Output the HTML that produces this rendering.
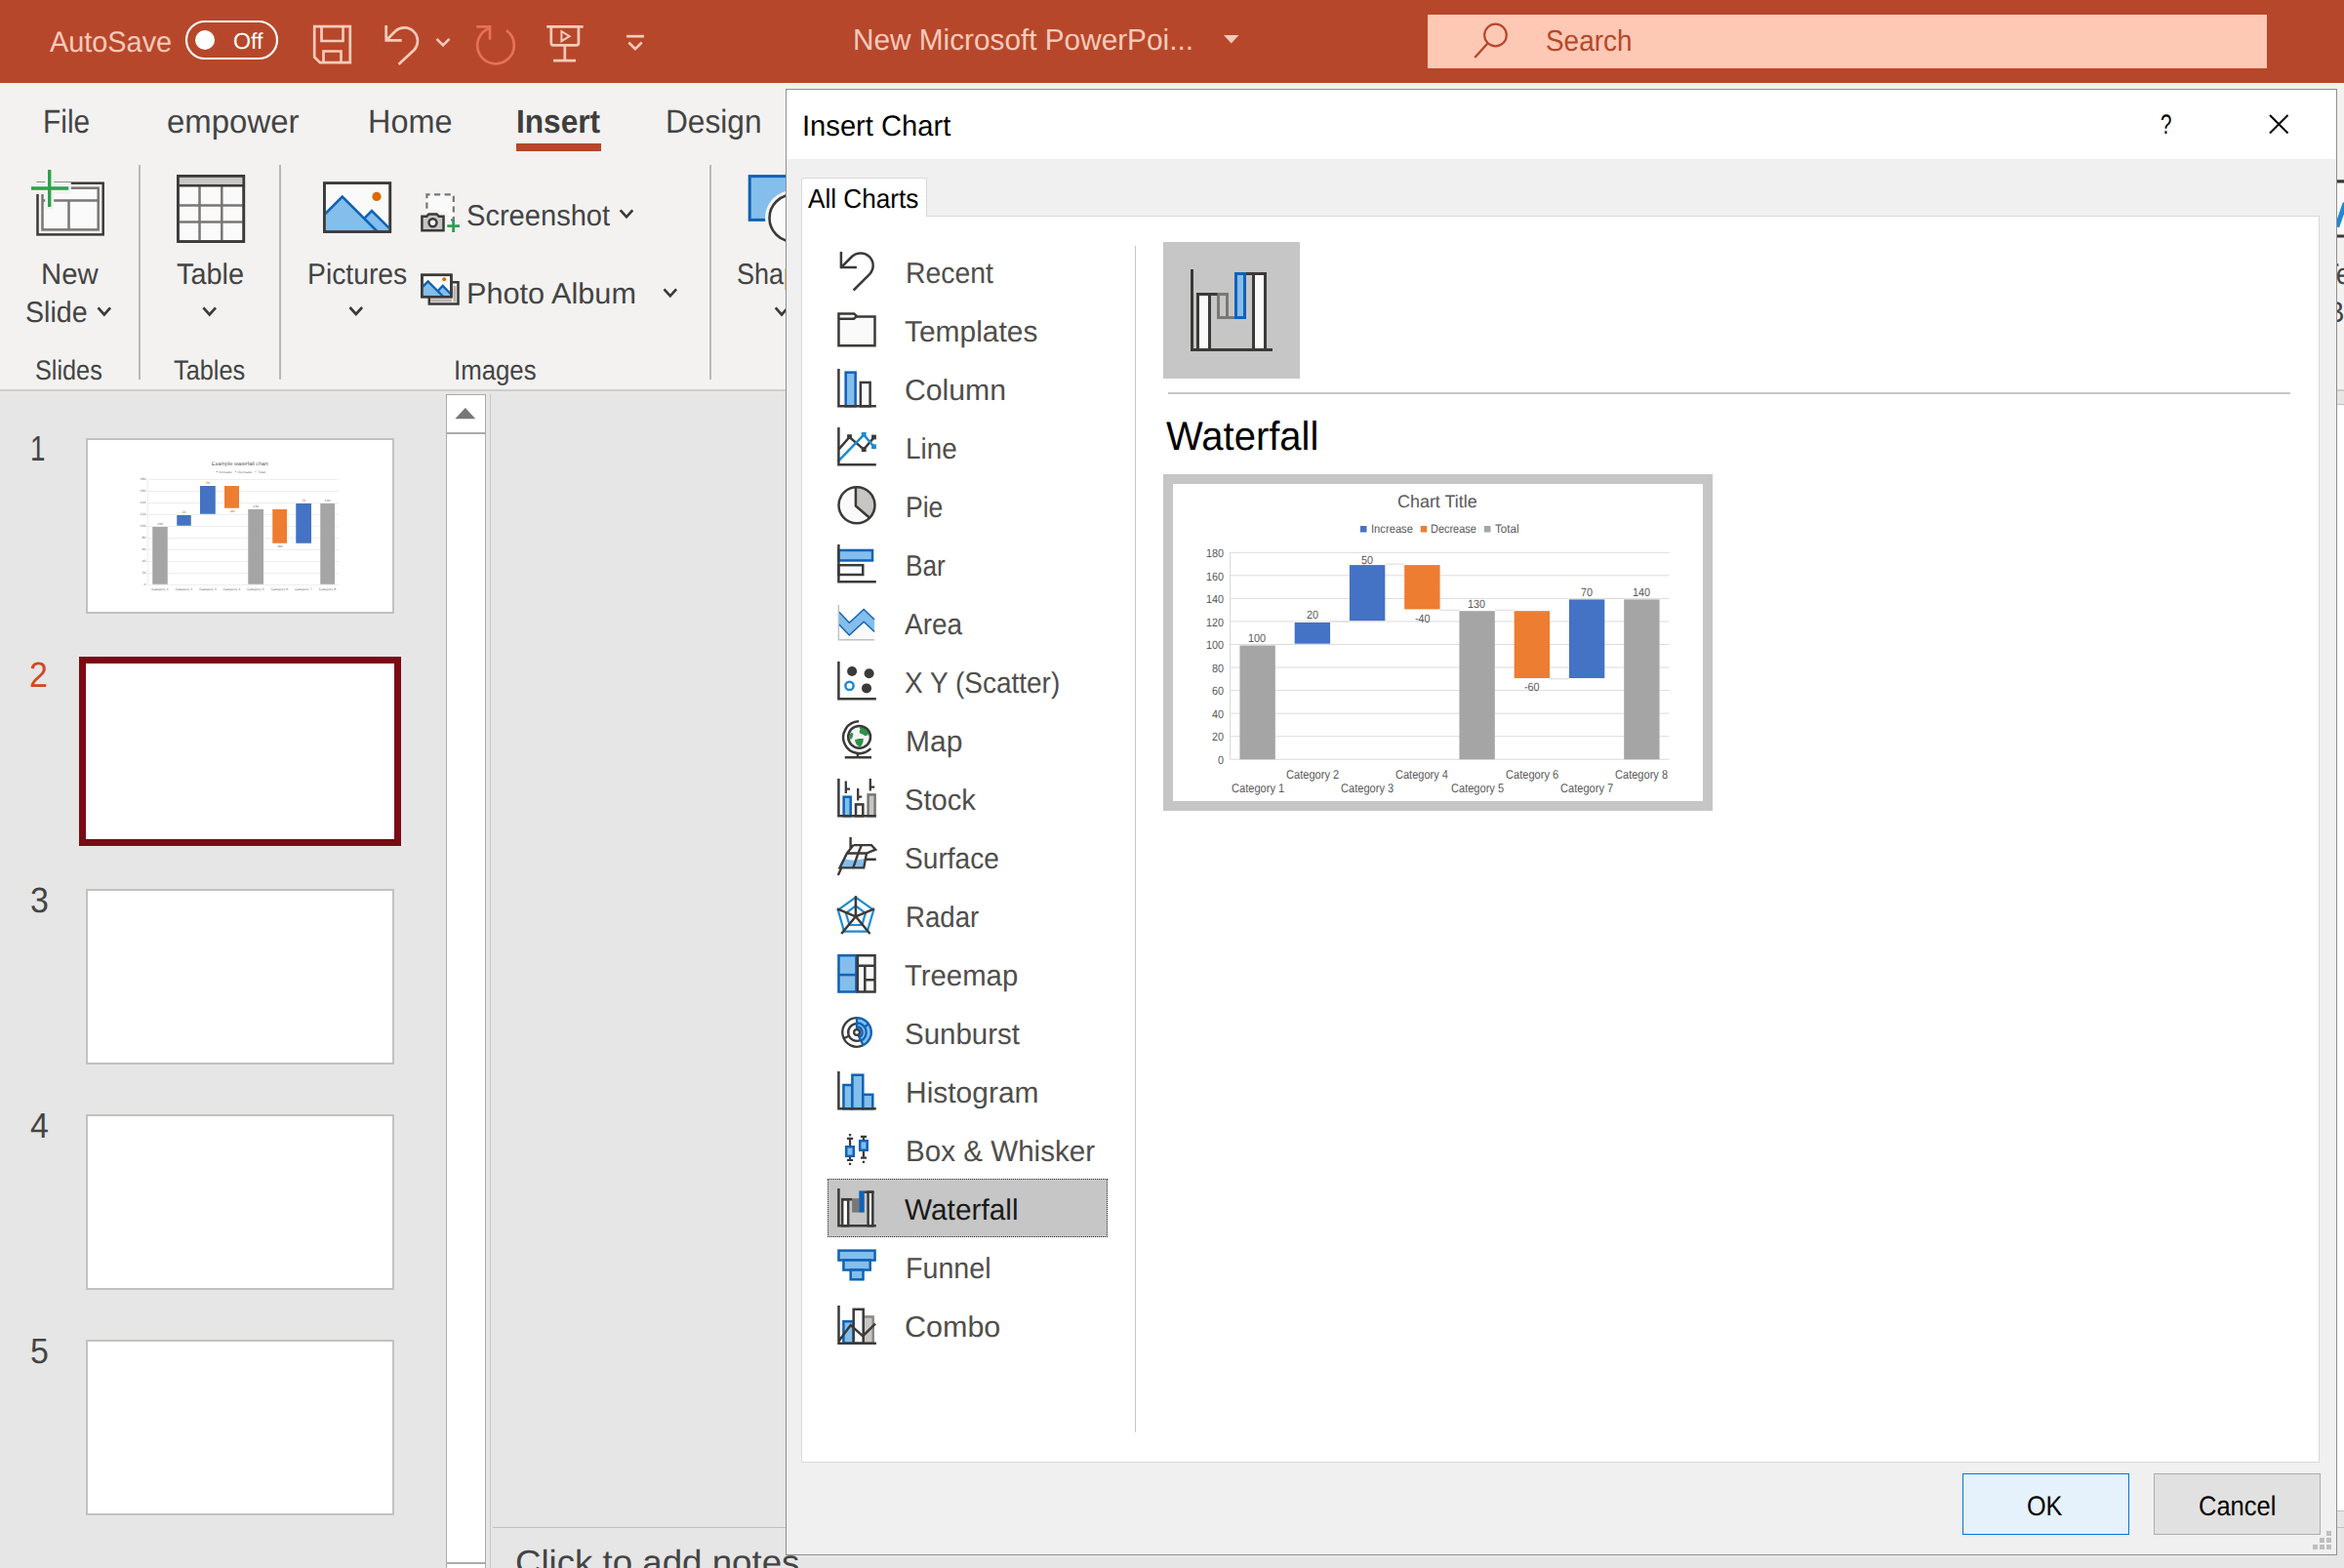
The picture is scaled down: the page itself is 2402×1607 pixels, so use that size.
<!DOCTYPE html>
<html lang="en"><head><meta charset="utf-8"><title>Insert Chart - PowerPoint</title>
<style>
html,body{margin:0;padding:0}
body{width:2402px;height:1607px;overflow:hidden;position:relative;background:#e6e6e6;font-family:"Liberation Sans",sans-serif;text-rendering:geometricPrecision}
body div,body svg,body span.t{position:absolute}
span.t{white-space:nowrap;line-height:1;transform-origin:0 0;display:block}
svg{overflow:visible}
</style></head><body>
<div style="left:0px;top:0px;width:2402px;height:85px;background:#b7472a;"></div>
<div style="left:1463px;top:15px;width:860px;height:55px;background:#fdc9b5;"></div>
<span class="t" style="left:51.00px;top:29.00px;font-size:29.71px;color:#f9cabb;transform:scaleX(0.9715);">AutoSave</span>
<span class="t" style="left:239.41px;top:31.00px;font-size:23.19px;color:#ffffff;transform:scaleX(1.0001);">Off</span>
<span class="t" style="left:873.67px;top:26.00px;font-size:30.43px;color:#f9cabb;transform:scaleX(0.9782);">New Microsoft PowerPoi...</span>
<span class="t" style="left:1584.13px;top:27.00px;font-size:30.43px;color:#b7472a;transform:scaleX(0.9173);">Search</span>
<div style="left:0px;top:85px;width:2402px;height:314px;background:#f3f2f1;"></div>
<div style="left:0px;top:399px;width:2402px;height:2px;background:#cfcdcb;"></div>
<span class="t" style="left:44.07px;top:109.00px;font-size:33.7px;color:#444444;transform:scaleX(0.8866);">File</span>
<span class="t" style="left:171.37px;top:109.00px;font-size:33.7px;color:#444444;transform:scaleX(0.9779);">empower</span>
<span class="t" style="left:377.37px;top:109.00px;font-size:33.7px;color:#444444;transform:scaleX(0.9616);">Home</span>
<span class="t" style="left:681.93px;top:109.00px;font-size:33.7px;color:#444444;transform:scaleX(0.9395);">Design</span>
<span class="t" style="left:528.52px;top:109.00px;font-size:33.7px;color:#3f3e3d;transform:scaleX(0.9386);font-weight:bold;">Insert</span>
<div style="left:529px;top:147px;width:87px;height:8px;background:#b7472a;"></div>
<div style="left:142px;top:169px;width:2px;height:220px;background:#bab8b6;"></div>
<div style="left:286px;top:169px;width:2px;height:220px;background:#bab8b6;"></div>
<div style="left:727px;top:169px;width:2px;height:220px;background:#bab8b6;"></div>
<span class="t" style="left:42.01px;top:267.00px;font-size:30.0px;color:#444444;transform:scaleX(0.9778);">New</span>
<span class="t" style="left:26.31px;top:306.00px;font-size:30.0px;color:#444444;transform:scaleX(0.9542);">Slide</span>
<span class="t" style="left:180.50px;top:267.00px;font-size:30.0px;color:#444444;transform:scaleX(0.9631);">Table</span>
<span class="t" style="left:314.99px;top:267.00px;font-size:30.0px;color:#444444;transform:scaleX(0.9435);">Pictures</span>
<span class="t" style="left:478.29px;top:207.00px;font-size:30.0px;color:#444444;transform:scaleX(0.9694);">Screenshot</span>
<span class="t" style="left:477.90px;top:287.00px;font-size:30.0px;color:#444444;transform:scaleX(1.0228);">Photo Album</span>
<span class="t" style="left:755.16px;top:267.00px;font-size:30.0px;color:#444444;transform:scaleX(0.9011);">Shapes</span>
<span class="t" style="left:36.46px;top:365.00px;font-size:28.26px;color:#444444;transform:scaleX(0.8942);">Slides</span>
<span class="t" style="left:177.60px;top:365.00px;font-size:28.26px;color:#444444;transform:scaleX(0.8959);">Tables</span>
<span class="t" style="left:464.74px;top:365.00px;font-size:28.26px;color:#444444;transform:scaleX(0.9126);">Images</span>
<span class="t" style="left:2380.07px;top:267.00px;font-size:30.0px;color:#444444;transform:scaleX(0.9200);">Text</span>
<span class="t" style="left:2383.84px;top:306.00px;font-size:30.0px;color:#444444;transform:scaleX(0.9200);">Box</span>
<svg style="left:2380px;top:170px;" width="22" height="90" viewBox="0 0 22 90"><rect x="0" y="15.8" width="22" height="56" fill="#fafafa"/><path d="M0 15.8 H22 M0 72 H22" fill="none" stroke="#3b3a39" stroke-width="3.2"/><path d="M14.8 62.5 L23.2 38" fill="none" stroke="#1e8ad2" stroke-width="5"/></svg>
<div style="left:88px;top:449px;width:316px;height:180px;background:#ffffff;border:2px solid #c3c1bf;box-sizing:border-box;"></div>
<span class="t" style="left:31.48px;top:442.00px;font-size:36.5px;color:#444444;transform:scaleX(0.7600);">1</span>
<div style="left:81px;top:673px;width:330px;height:194px;background:#ffffff;border:7px solid #7b0a14;box-sizing:border-box;"></div>
<span class="t" style="left:30.45px;top:674.00px;font-size:36.5px;color:#d24726;transform:scaleX(0.9300);">2</span>
<div style="left:88px;top:911px;width:316px;height:180px;background:#ffffff;border:2px solid #c3c1bf;box-sizing:border-box;"></div>
<span class="t" style="left:30.72px;top:905.00px;font-size:36.5px;color:#444444;transform:scaleX(0.9300);">3</span>
<div style="left:88px;top:1142px;width:316px;height:180px;background:#ffffff;border:2px solid #c3c1bf;box-sizing:border-box;"></div>
<span class="t" style="left:30.72px;top:1136.00px;font-size:36.5px;color:#444444;transform:scaleX(0.9300);">4</span>
<div style="left:88px;top:1373px;width:316px;height:180px;background:#ffffff;border:2px solid #c3c1bf;box-sizing:border-box;"></div>
<span class="t" style="left:30.72px;top:1367.00px;font-size:36.5px;color:#444444;transform:scaleX(0.9300);">5</span>
<svg style="left:88px;top:449px;font-family:&quot;Liberation Sans&quot;,sans-serif;" width="316" height="180" viewBox="88 449 316 180"><rect x="151.25" y="599.0" width="196.25" height="0.5" fill="#dcdcdc"/><rect x="151.25" y="587.0" width="196.25" height="0.5" fill="#dcdcdc"/><rect x="151.25" y="575.0" width="196.25" height="0.5" fill="#dcdcdc"/><rect x="151.25" y="563.0" width="196.25" height="0.5" fill="#dcdcdc"/><rect x="151.25" y="551.0" width="196.25" height="0.5" fill="#dcdcdc"/><rect x="151.25" y="539.0" width="196.25" height="0.5" fill="#dcdcdc"/><rect x="151.25" y="527.0" width="196.25" height="0.5" fill="#dcdcdc"/><rect x="151.25" y="515.0" width="196.25" height="0.5" fill="#dcdcdc"/><rect x="151.25" y="503.0" width="196.25" height="0.5" fill="#dcdcdc"/><rect x="151.25" y="491.0" width="196.25" height="0.5" fill="#dcdcdc"/><rect x="151" y="491.25" width="0.5" height="108" fill="#dcdcdc"/><rect x="156.25" y="540" width="15.5" height="58.75" fill="#a5a5a5"/><rect x="181.25" y="528" width="14.5" height="10.75" fill="#4472c4"/><rect x="205" y="498" width="15.75" height="28.75" fill="#4472c4"/><rect x="230" y="498" width="15" height="22.75" fill="#ed7d31"/><rect x="254.25" y="522" width="15.75" height="76.75" fill="#a5a5a5"/><rect x="279.25" y="522" width="14.75" height="34.75" fill="#ed7d31"/><rect x="303.25" y="516" width="15.75" height="40.75" fill="#4472c4"/><rect x="328.25" y="516" width="14.75" height="82.75" fill="#a5a5a5"/><text x="245.75" y="476.7" font-size="5.2" text-anchor="middle" textLength="58" lengthAdjust="spacingAndGlyphs" fill="#555">Example waterfall chart</text><rect x="221.8" y="483" width="1" height="1" fill="#4472c4"/><rect x="240.8" y="483" width="1" height="1" fill="#ed7d31"/><rect x="261.5" y="483" width="1" height="1" fill="#a5a5a5"/><text x="231" y="484.6" font-size="3.4" text-anchor="middle" textLength="13.5" lengthAdjust="spacingAndGlyphs" fill="#777">Increase</text><text x="251" y="484.6" font-size="3.4" text-anchor="middle" textLength="15" lengthAdjust="spacingAndGlyphs" fill="#777">Decrease</text><text x="268" y="484.6" font-size="3.4" text-anchor="middle" textLength="8" lengthAdjust="spacingAndGlyphs" fill="#777">Total</text><text x="149.6" y="600.4" font-size="3.3" text-anchor="end" textLength="2" lengthAdjust="spacingAndGlyphs" fill="#777">0</text><text x="149.6" y="588.4" font-size="3.3" text-anchor="end" textLength="4" lengthAdjust="spacingAndGlyphs" fill="#777">20</text><text x="149.6" y="576.4" font-size="3.3" text-anchor="end" textLength="4" lengthAdjust="spacingAndGlyphs" fill="#777">40</text><text x="149.6" y="564.4" font-size="3.3" text-anchor="end" textLength="4" lengthAdjust="spacingAndGlyphs" fill="#777">60</text><text x="149.6" y="552.4" font-size="3.3" text-anchor="end" textLength="4" lengthAdjust="spacingAndGlyphs" fill="#777">80</text><text x="149.6" y="540.4" font-size="3.3" text-anchor="end" textLength="6" lengthAdjust="spacingAndGlyphs" fill="#777">100</text><text x="149.6" y="528.4" font-size="3.3" text-anchor="end" textLength="6" lengthAdjust="spacingAndGlyphs" fill="#777">120</text><text x="149.6" y="516.4" font-size="3.3" text-anchor="end" textLength="6" lengthAdjust="spacingAndGlyphs" fill="#777">140</text><text x="149.6" y="504.4" font-size="3.3" text-anchor="end" textLength="6" lengthAdjust="spacingAndGlyphs" fill="#777">160</text><text x="149.6" y="492.4" font-size="3.3" text-anchor="end" textLength="6" lengthAdjust="spacingAndGlyphs" fill="#777">180</text><text x="164" y="537.7" font-size="3.3" text-anchor="middle" textLength="6" lengthAdjust="spacingAndGlyphs" fill="#777">100</text><text x="188.5" y="525.7" font-size="3.3" text-anchor="middle" textLength="4" lengthAdjust="spacingAndGlyphs" fill="#777">20</text><text x="213" y="495.7" font-size="3.3" text-anchor="middle" textLength="4" lengthAdjust="spacingAndGlyphs" fill="#777">50</text><text x="237.5" y="524.8" font-size="3.3" text-anchor="middle" textLength="6" lengthAdjust="spacingAndGlyphs" fill="#777">-40</text><text x="262" y="519.7" font-size="3.3" text-anchor="middle" textLength="6" lengthAdjust="spacingAndGlyphs" fill="#777">130</text><text x="286.5" y="560.6" font-size="3.3" text-anchor="middle" textLength="6" lengthAdjust="spacingAndGlyphs" fill="#777">-60</text><text x="311" y="513.7" font-size="3.3" text-anchor="middle" textLength="4" lengthAdjust="spacingAndGlyphs" fill="#777">70</text><text x="335.6" y="513.7" font-size="3.3" text-anchor="middle" textLength="6" lengthAdjust="spacingAndGlyphs" fill="#777">140</text><text x="164" y="604.9" font-size="3.3" text-anchor="middle" textLength="17.5" lengthAdjust="spacingAndGlyphs" fill="#777">Category 1</text><text x="188.5" y="604.9" font-size="3.3" text-anchor="middle" textLength="17.5" lengthAdjust="spacingAndGlyphs" fill="#777">Category 2</text><text x="213" y="604.9" font-size="3.3" text-anchor="middle" textLength="17.5" lengthAdjust="spacingAndGlyphs" fill="#777">Category 3</text><text x="237.5" y="604.9" font-size="3.3" text-anchor="middle" textLength="17.5" lengthAdjust="spacingAndGlyphs" fill="#777">Category 4</text><text x="262" y="604.9" font-size="3.3" text-anchor="middle" textLength="17.5" lengthAdjust="spacingAndGlyphs" fill="#777">Category 5</text><text x="286.5" y="604.9" font-size="3.3" text-anchor="middle" textLength="17.5" lengthAdjust="spacingAndGlyphs" fill="#777">Category 6</text><text x="311" y="604.9" font-size="3.3" text-anchor="middle" textLength="17.5" lengthAdjust="spacingAndGlyphs" fill="#777">Category 7</text><text x="335.6" y="604.9" font-size="3.3" text-anchor="middle" textLength="17.5" lengthAdjust="spacingAndGlyphs" fill="#777">Category 8</text></svg>
<div style="left:457px;top:404px;width:41px;height:40px;background:#ffffff;border:1px solid #ababab;box-sizing:border-box;"></div>
<div style="left:457px;top:444px;width:41px;height:1158px;background:#ffffff;border:1px solid #ababab;box-sizing:border-box;"></div>
<div style="left:457px;top:1602px;width:41px;height:10px;background:#ffffff;border:1px solid #ababab;box-sizing:border-box;"></div>
<div style="left:502px;top:404px;width:1px;height:1203px;background:#c6c6c6;"></div>
<div style="left:505px;top:1565px;width:300px;height:1px;background:#c0c0c0;"></div>
<span class="t" style="left:528.28px;top:1585.00px;font-size:34.78px;color:#444444;transform:scaleX(1.0543);">Click to add notes</span>
<div style="left:2395px;top:414px;width:7px;height:1px;background:#c0c0c0;"></div>
<div style="left:2395px;top:415px;width:7px;height:1133px;background:#ffffff;"></div>
<div style="left:2395px;top:1548px;width:7px;height:1px;background:#c0c0c0;"></div>
<div style="left:2395px;top:1565px;width:7px;height:1px;background:#c0c0c0;"></div>
<div style="left:805px;top:91px;width:1590px;height:1503px;background:#f0f0f0;border:1px solid #8f8f8d;box-sizing:border-box;"></div>
<div style="left:806px;top:92px;width:1588px;height:71px;background:#ffffff;"></div>
<span class="t" style="left:822.02px;top:115.00px;font-size:29.71px;color:#000;transform:scaleX(0.9818);">Insert Chart</span>
<span class="t" style="left:2214.11px;top:113.00px;font-size:28.26px;color:#000;transform:scaleX(0.7254);">?</span>
<div style="left:821px;top:221px;width:1556px;height:1278px;background:#ffffff;border:1px solid #d9d9d9;box-sizing:border-box;"></div>
<div style="left:821px;top:182px;width:129px;height:40px;background:#ffffff;border:1px solid #d9d9d9;box-sizing:border-box;border-bottom:none;"></div>
<span class="t" style="left:828.00px;top:190.00px;font-size:27.54px;color:#000;transform:scaleX(0.9493);">All Charts</span>
<div style="left:1163px;top:252px;width:1px;height:1216px;background:#c8c8c8;"></div>
<div style="left:848px;top:1208px;width:287px;height:60px;background:#c6c6c6;border:1px dotted #333;box-sizing:border-box;"></div>
<span class="t" style="left:928.03px;top:266.00px;font-size:30.14px;color:#504e4c;transform:scaleX(0.9411);">Recent</span>
<span class="t" style="left:926.78px;top:326.00px;font-size:30.14px;color:#504e4c;transform:scaleX(0.9937);">Templates</span>
<span class="t" style="left:926.58px;top:386.00px;font-size:30.14px;color:#504e4c;transform:scaleX(1.0025);">Column</span>
<span class="t" style="left:928.07px;top:446.00px;font-size:30.14px;color:#504e4c;transform:scaleX(0.9240);">Line</span>
<span class="t" style="left:928.17px;top:506.00px;font-size:30.14px;color:#504e4c;transform:scaleX(0.8816);">Pie</span>
<span class="t" style="left:928.20px;top:566.00px;font-size:30.14px;color:#504e4c;transform:scaleX(0.8705);">Bar</span>
<span class="t" style="left:927.25px;top:626.00px;font-size:30.14px;color:#504e4c;transform:scaleX(0.9286);">Area</span>
<span class="t" style="left:926.81px;top:686.00px;font-size:30.14px;color:#504e4c;transform:scaleX(0.9294);">X Y (Scatter)</span>
<span class="t" style="left:927.91px;top:746.00px;font-size:30.14px;color:#504e4c;transform:scaleX(0.9954);">Map</span>
<span class="t" style="left:927.09px;top:806.00px;font-size:30.14px;color:#504e4c;transform:scaleX(0.9678);">Stock</span>
<span class="t" style="left:927.12px;top:866.00px;font-size:30.14px;color:#504e4c;transform:scaleX(0.9336);">Surface</span>
<span class="t" style="left:928.09px;top:926.00px;font-size:30.14px;color:#504e4c;transform:scaleX(0.9166);">Radar</span>
<span class="t" style="left:926.79px;top:986.00px;font-size:30.14px;color:#504e4c;transform:scaleX(0.9729);">Treemap</span>
<span class="t" style="left:927.08px;top:1046.00px;font-size:30.14px;color:#504e4c;transform:scaleX(0.9783);">Sunburst</span>
<span class="t" style="left:927.91px;top:1106.00px;font-size:30.14px;color:#504e4c;transform:scaleX(0.9946);">Histogram</span>
<span class="t" style="left:927.94px;top:1166.00px;font-size:30.14px;color:#504e4c;transform:scaleX(0.9827);">Box &amp; Whisker</span>
<span class="t" style="left:927.25px;top:1226.00px;font-size:30.14px;color:#1a1a1a;transform:scaleX(0.9896);">Waterfall</span>
<span class="t" style="left:928.01px;top:1286.00px;font-size:30.14px;color:#504e4c;transform:scaleX(0.9509);">Funnel</span>
<span class="t" style="left:926.57px;top:1346.00px;font-size:30.14px;color:#504e4c;transform:scaleX(1.0124);">Combo</span>
<div style="left:1192px;top:248px;width:140px;height:140px;background:#c6c6c6;"></div>
<div style="left:1197px;top:402px;width:1150px;height:2px;background:#c6c6c6;"></div>
<span class="t" style="left:1195.00px;top:427.00px;font-size:41.3px;color:#000;transform:scaleX(0.9689);">Waterfall</span>
<div style="left:1192px;top:486px;width:563px;height:345px;background:#c6c6c6;"></div>
<div style="left:1202px;top:496px;width:543px;height:325px;background:#ffffff;"></div>
<div style="left:2011px;top:1510px;width:171px;height:63px;background:#e5f1fb;border:1px solid #0078d7;box-sizing:border-box;"></div>
<div style="left:2207px;top:1510px;width:171px;height:63px;background:#e1e1e1;border:1px solid #adadad;box-sizing:border-box;"></div>
<span class="t" style="left:2077.32px;top:1529.00px;font-size:28.26px;color:#000;transform:scaleX(0.8928);">OK</span>
<span class="t" style="left:2252.80px;top:1529.00px;font-size:28.26px;color:#000;transform:scaleX(0.9023);">Cancel</span>
<div style="left:2384px;top:1569px;width:5px;height:5px;background:#bfbfbf;"></div>
<div style="left:2377px;top:1576px;width:5px;height:5px;background:#bfbfbf;"></div>
<div style="left:2384px;top:1576px;width:5px;height:5px;background:#bfbfbf;"></div>
<div style="left:2370px;top:1583px;width:5px;height:5px;background:#bfbfbf;"></div>
<div style="left:2377px;top:1583px;width:5px;height:5px;background:#bfbfbf;"></div>
<div style="left:2384px;top:1583px;width:5px;height:5px;background:#bfbfbf;"></div>
<svg style="left:0px;top:0px;" width="700" height="85" viewBox="0 0 700 85"><rect x="191" y="22" width="93" height="38" rx="19" fill="none" stroke="#fff" stroke-width="2.2" /><circle cx="210" cy="41" r="10" fill="#fff"/><path d="M322.2 27.2 H358.8 V64.2 H328 L322.2 58.5 Z" fill="none" stroke="#f9cabb" stroke-width="2.7" /><path d="M329.5 27.5 V42 H351.5 V27.5" fill="none" stroke="#f9cabb" stroke-width="2.7" /><path d="M331.5 64 V52.5 H349.5 V64" fill="none" stroke="#f9cabb" stroke-width="2.7" /><path d="M395.7 26 V41.4 H411.7" fill="none" stroke="#f9cabb" stroke-width="2.7" /><path d="M396.6 40.5 L405.3 31.8 A13.6 13.6 0 0 1 424.5 51 L408.5 66" fill="none" stroke="#f9cabb" stroke-width="2.7" /><path d="M447.5 39.8 L454 46.3 L460.5 39.8" fill="none" stroke="#f9cabb" stroke-width="2.6" /><path d="M502 28.7 A18.8 18.8 0 1 0 518.9 31.2" fill="none" stroke="#e8705a" stroke-width="2.7" /><path d="M488.2 27.4 H502 V40.7" fill="none" stroke="#e8705a" stroke-width="2.7" /><path d="M560.2 27.4 H597.6" fill="none" stroke="#f9cabb" stroke-width="2.7" /><path d="M564.8 27.4 V44 Q564.8 46.3 567.1 46.3 H590.6 Q592.9 46.3 592.9 44 V27.4" fill="none" stroke="#f9cabb" stroke-width="2.7" /><path d="M578.8 46.3 V62 M567 62.2 H590" fill="none" stroke="#f9cabb" stroke-width="2.7" /><path d="M575.4 32.2 L583.6 37.2 L575.4 42.2 Z" fill="none" stroke="#f9cabb" stroke-width="2" /><path d="M642 37.2 H660" fill="none" stroke="#f9cabb" stroke-width="2.7" /><path d="M644.3 43.5 L651 50.2 L657.7 43.5" fill="none" stroke="#f9cabb" stroke-width="2.6" /></svg>
<svg style="left:1250px;top:30px;" width="24" height="20" viewBox="0 0 24 20"><path d="M4 6 H19.5 L11.75 14.5 Z" fill="#f9cabb"/></svg>
<svg style="left:1500px;top:15px;" width="50" height="55" viewBox="0 0 50 55"><circle cx="32.5" cy="21" r="11.3" fill="none" stroke="#b7472a" stroke-width="2.2" /><path d="M24.6 29.2 L11.3 44" fill="none" stroke="#b7472a" stroke-width="2.4" /></svg>
<svg style="left:0px;top:0px;overflow:hidden;" width="805" height="400" viewBox="0 0 805 400"><rect x="38.5" y="187.7" width="67.2" height="52.7" fill="none" stroke="#3b3a39" stroke-width="2.5" /><rect x="43.5" y="192.7" width="57.2" height="42.7" fill="#fafafa" stroke="#797775" stroke-width="2.5" /><path d="M43.5 205.5 H100.7 M70.5 205.5 V235.4" fill="none" stroke="#797775" stroke-width="2.5" /><path d="M50.7 172 V214.5" fill="none" stroke="#f3f2f1" stroke-width="9" /><path d="M30 193 H72.8" fill="none" stroke="#f3f2f1" stroke-width="12" /><path d="M50.7 174 V212 M32 193 H70.3" fill="none" stroke="#2fa04e" stroke-width="3.4" /><path d="M100.5 315.4 L106.8 322.4 L113.1 315.4" fill="none" stroke="#3b3a39" stroke-width="2.7" /><rect x="182.4" y="180.4" width="67.4" height="67.2" fill="#fafafa" stroke="#3b3a39" stroke-width="2.6" /><rect x="183.6" y="181.6" width="65" height="8" fill="#c8c6c4"/><path d="M204.5 191 V247 M227.3 191 V247 M183 210.5 H249 M183 227.5 H249" fill="none" stroke="#797775" stroke-width="2.5" /><path d="M182.4 190.2 H249.8" fill="none" stroke="#3b3a39" stroke-width="2.6" /><rect x="182.4" y="180.4" width="67.4" height="67.2" fill="none" stroke="#3b3a39" stroke-width="2.6" /><path d="M208.39999999999998 315.4 L214.7 322.4 L221.0 315.4" fill="none" stroke="#3b3a39" stroke-width="2.7" /><rect x="332.4" y="187.7" width="67.4" height="49.8" fill="#fafafa" stroke="#3b3a39" stroke-width="2.6" /><svg x="333.7" y="189" width="64.8" height="47.2" viewBox="333.7 189 64.8 47.2" style="overflow:hidden"><path d="M330 222.3 L350.8 201.5 L388 238.7 H330 Z" fill="#83beec"/><path d="M373.2 223.9 L381 216 L402 237 V240 H389.3 Z" fill="#83beec"/><path d="M330 222.3 L350.8 201.5 L388 238.7 M373.2 223.9 L381 216 L402 237" fill="none" stroke="#1062b5" stroke-width="2.6" /></svg><circle cx="386" cy="201.4" r="4.6" fill="#db6a00"/><rect x="332.4" y="187.7" width="67.4" height="49.8" fill="none" stroke="#3b3a39" stroke-width="2.6" /><path d="M358.5 315 L364.8 322.0 L371.1 315" fill="none" stroke="#3b3a39" stroke-width="2.7" /><rect x="437.4" y="199.4" width="27.4" height="26" fill="#fafafa" stroke="#797775" stroke-width="2.2" stroke-dasharray='6.2 4.4' stroke-dashoffset='3'/><path d="M429 240 V217 H436 L438.5 215 H448.5 L451.5 217.5 H458.5 V240 Z" fill="#f3f2f1"/><path d="M432.4 236.3 V221.7 H437.3 L439.5 219.4 H447.5 L449.7 221.7 H454.5 V236.3 Z" fill="#c8c6c4" stroke="#3b3a39" stroke-width="2.5" /><circle cx="443.5" cy="228.2" r="4" fill="#fafafa" stroke="#3b3a39" stroke-width="2.5" /><path d="M464.6 225.5 V238 M458.3 231.7 H471" fill="none" stroke="#2fa04e" stroke-width="2.8" /><path d="M635.7 215.3 L642 222.3 L648.3 215.3" fill="none" stroke="#3b3a39" stroke-width="2.7" /><path d="M439.8 304 V311.4 H469.5 V289.2 H463" fill="none" stroke="#3b3a39" stroke-width="2.5" /><path d="M441 306.5 H463 V309.5 H441 Z M464.5 293 H467.5 V309.5 H464.5Z" fill="#b5b3b1"/><rect x="432.4" y="281.8" width="30" height="22.4" fill="#fafafa" stroke="#3b3a39" stroke-width="2.5" /><svg x="433.6" y="283" width="27.6" height="20" viewBox="433.6 283 27.6 20" style="overflow:hidden"><path d="M431 296 L438.6 288.4 L455 304.8 H431 Z M449 297.7 L453.7 293 L464 303.4 V305 H456Z" fill="#83beec"/><path d="M431 296 L438.6 288.4 L455 304.8 M449 297.7 L453.7 293 L464 303.4" fill="none" stroke="#1062b5" stroke-width="2.3" /></svg><circle cx="455.2" cy="286.3" r="2" fill="#db6a00"/><rect x="432.4" y="281.8" width="30" height="22.4" fill="none" stroke="#3b3a39" stroke-width="2.5" /><path d="M680.5 296.3 L686.8 303.3 L693.0999999999999 296.3" fill="none" stroke="#3b3a39" stroke-width="2.7" /><rect x="768.2" y="180.6" width="60" height="44.8" fill="#83beec" stroke="#1062b5" stroke-width="3" /><circle cx="812.5" cy="223.5" r="28.5" fill="#f3f2f1"/><circle cx="812.5" cy="223.5" r="24" fill="#fafafa" stroke="#3b3a39" stroke-width="2.6" /><path d="M794.7 315.4 L801 322.4 L807.3 315.4" fill="none" stroke="#3b3a39" stroke-width="2.7" /></svg>
<svg style="left:0px;top:0px;" width="2402" height="1607" viewBox="0 0 2402 1607"><g transform="translate(858.2,258)"><path d="M3.7 0 V16.1 H19.7" fill="none" stroke="#3b3a39" stroke-width="2.5" /><path d="M4.3 15.5 L14.75 5 A12.8 12.8 0 0 1 32.85 23.1 L16.4 39.5" fill="none" stroke="#3b3a39" stroke-width="2.5" /></g><g transform="translate(858.2,318)"><path d="M1.25 3.4 H17 L20.1 6.4 H38.3 V36.3 H1.25 Z" fill="#fafafa" stroke="#3b3a39" stroke-width="2.5" /><path d="M1.25 8.7 H16.8 L19.4 6.4" fill="none" stroke="#3b3a39" stroke-width="2.5" /></g><g transform="translate(858.2,378)"><rect x="8.45" y="3.65" width="10.00" height="34.65" fill="#83beec" stroke="#1062b5" stroke-width="2.5" /><rect x="23.65" y="13.95" width="9.75" height="24.35" fill="#fafafa" stroke="#3b3a39" stroke-width="2.5" /><path d="M1.2 0 V38.3 H39.6" fill="none" stroke="#3b3a39" stroke-width="2.5" /></g><g transform="translate(858.2,438)"><path d="M1.2 22.6 L12.3 10 L27 22.6 L37.3 10.4" fill="none" stroke="#3b3a39" stroke-width="2.5" /><rect x="9.9" y="7.199999999999999" width="4.8" height="4.8" fill="#3b3a39"/><rect x="24.6" y="20.200000000000003" width="4.8" height="4.8" fill="#3b3a39"/><rect x="34.9" y="7.6" width="4.8" height="4.8" fill="#3b3a39"/><path d="M0.3 35.2 L27 7.7 L37.3 19.7" fill="none" stroke="#1e8ad2" stroke-width="2.5" /><rect x="24.6" y="5.0" width="4.8" height="4.8" fill="#1e8ad2"/><rect x="34.9" y="17.3" width="4.8" height="4.8" fill="#1e8ad2"/><path d="M1.2 0 V38.3 H39.6" fill="none" stroke="#3b3a39" stroke-width="2.5" /></g><g transform="translate(858.2,498)"><circle cx="19.8" cy="19.8" r="18.5" fill="#fafafa"/><path d="M18.7 20.5 V1.3 A18.5 18.5 0 0 1 32.9 32.8 Z" fill="#c8c6c4"/><circle cx="19.8" cy="19.8" r="18.5" fill="none" stroke="#3b3a39" stroke-width="2.5" /><path d="M18.7 1.3 V20.5 L32.9 32.8" fill="none" stroke="#3b3a39" stroke-width="2.5" stroke-linejoin='round'/></g><g transform="translate(858.2,558)"><rect x="1.15" y="5.95" width="34.70" height="10.50" fill="#83beec" stroke="#1062b5" stroke-width="2.5" /><rect x="1.15" y="21.2" width="24.90" height="9.80" fill="#fafafa" stroke="#3b3a39" stroke-width="2.5" /><path d="M1.2 0 V38.3 H39.6" fill="none" stroke="#3b3a39" stroke-width="2.5" /></g><g transform="translate(858.2,618)"><path d="M1.15 21.5 L12.1 32.9 L27 19.2 L37.9 29.5 V37.8 H1.15 Z" fill="#fafafa"/><path d="M1.15 8.8 L12.1 20.3 L27 6.5 L37.9 16.9 V29.5 L27 19.2 L12.1 32.9 L1.15 21.5 Z" fill="#83beec"/><path d="M1.15 8.8 L12.1 20.3 L27 6.5 L37.9 16.9 M1.15 21.5 L12.1 32.9 L27 19.2 L37.9 29.5" fill="none" stroke="#1062b5" stroke-width="1.4" /><path d="M1.15 2 V37.8 H37.9" fill="none" stroke="#c2c0be" stroke-width="1.4" /></g><g transform="translate(858.2,678)"><circle cx="14.9" cy="10" r="5" fill="#3b3a39"/><circle cx="32.4" cy="12.3" r="5" fill="#3b3a39"/><circle cx="29.8" cy="27.4" r="5" fill="#3b3a39"/><circle cx="12.3" cy="24.9" r="4.1" fill="#fff" stroke="#1e8ad2" stroke-width="2.5" /><path d="M1.2 0 V38.3 H39.6" fill="none" stroke="#3b3a39" stroke-width="2.5" /></g><g transform="translate(858.2,738)"><circle cx="22.4" cy="17.3" r="11.4" fill="#f4f4f4"/><path d="M14.5 12.4 L16.2 14.3 L15.4 17.5 L13.6 20.6 L12.4 17.2 L12.8 14.4 Z" fill="#2c9147"/><path d="M22.2 7.6 L26 6.9 L29.5 9 L31.9 12.6 L31.4 15.2 L28.3 16.2 L25.8 14.4 L23.4 14 L22.3 11.6 L23.4 9.8 Z" fill="#2c9147"/><path d="M17.7 20.2 L22 19.1 L26.6 18.9 L26.2 22.6 L24.6 26.2 L22.5 27.5 L19.9 25.6 L18.5 22.9 Z" fill="#2c9147"/><circle cx="22.4" cy="17.3" r="11.4" fill="none" stroke="#3b3a39" stroke-width="2.5" /><path d="M21.8 1.3 A16.4 16.4 0 1 0 34.1 29.1" fill="none" stroke="#3b3a39" stroke-width="2.5" /><path d="M20.7 33.6 V38.3 M7.5 38.3 H34.8" fill="none" stroke="#3b3a39" stroke-width="2.5" /></g><g transform="translate(858.2,798)"><rect x="6.4" y="18.7" width="7.10" height="19.60" fill="#83beec" stroke="#1062b5" stroke-width="2.5" /><rect x="18.8" y="26.4" width="7.30" height="11.90" fill="#fafafa" stroke="#3b3a39" stroke-width="2.5" /><rect x="31.4" y="16.4" width="7.00" height="21.90" fill="#c8c6c4" stroke="#797775" stroke-width="2.5" /><path d="M8.6 2.5 V15 M8.6 10.6 H12.8 M21 10 V22.6 M21 18.6 H25 M33.6 0 V12.6 M33.6 8.6 H38" fill="none" stroke="#3b3a39" stroke-width="2.3" /><path d="M1.2 0 V38.3 H39.6" fill="none" stroke="#3b3a39" stroke-width="2.5" /></g><g transform="translate(858.2,858)"><path d="M16.4 8.1 H34.8 L39 12.7 L29.8 16.5 L27 31.4 H2.3 L9.75 16.5 Z" fill="#fafafa"/><path d="M7 22 Q18 25.5 28.9 21.5 L27 31.4 H2.3 Z" fill="#83beec"/><path d="M13.4 0 V11.5 M16.4 8.1 H34.8 L39 12.7 L29.8 16.5 L27 31.4 H2.3 L9.75 16.5 L16.4 8.1 M9.75 16.5 H29.8 M24.7 8.1 L21.2 16.5 L16.1 31.4 M29 22.8 H39.6 M4 31.4 L0.6 38.9" fill="none" stroke="#3b3a39" stroke-width="2.4" /></g><g transform="translate(858.2,918)"><path d="M18.7 1.6 L37 14.7 L30.6 36.6 L6.8 36.6 L0.6 14.7 Z" fill="#fafafa" stroke="#1e8ad2" stroke-width="2.2" /><path d="M18.7 10.4 L28.7 17.9 L25.2 30 L12.3 30 L8.6 17.9 Z" fill="none" stroke="#1e8ad2" stroke-width="2.2" /><path d="M18.7 21.3 V0.2 M18.7 21.3 L37.8 13.3 M18.7 21.3 L-0.4 13.3 M18.7 21.3 L4 39 M18.7 21.3 L33.3 39" fill="none" stroke="#3b3a39" stroke-width="2.5" /></g><g transform="translate(858.2,978)"><rect x="1.25" y="1.25" width="17.95" height="37.25" fill="#83beec" stroke="#1062b5" stroke-width="2.5" /><path d="M1.25 21.1 H19.2" fill="none" stroke="#1062b5" stroke-width="2.5" /><rect x="20.6" y="1.25" width="17.75" height="37.25" fill="#fafafa" stroke="#3b3a39" stroke-width="2.5" /><path d="M20.6 11.7 H38.3 M28.1 11.7 V38.5 M28.1 26.3 H38.3" fill="none" stroke="#3b3a39" stroke-width="2.5" /></g><g transform="translate(858.2,1038)"><circle cx="19.85" cy="20" r="14.8" fill="#fafafa"/><path d="M19.85 20 L19.85 5.2 A14.8 14.8 0 0 1 26.34 33.3 Z" fill="#83beec"/><path d="M26.34 33.3 A14.8 14.8 0 1 1 19.85 5.2 M23.75 28.0 A8.9 8.9 0 1 1 19.85 11.1" fill="none" stroke="#3b3a39" stroke-width="2.3" /><path d="M11.78 23.76 L6.44 26.25" fill="none" stroke="#3b3a39" stroke-width="2.3" /><path d="M19.85 5.2 A14.8 14.8 0 0 1 26.34 33.3 M19.85 10.4 A9.6 9.6 0 0 1 24.06 28.63 M19.85 14.4 A5.6 5.6 0 0 1 22.3 25.03" fill="none" stroke="#1062b5" stroke-width="2.3" /><path d="M27.71 14.49 L31.97 11.51 M19.85 20 L19.85 5.2 M19.85 20 L26.34 33.3" fill="none" stroke="#1062b5" stroke-width="2.3" /><circle cx="19.85" cy="20" r="2.9" fill="#fff" stroke="#3b3a39" stroke-width="2.2" /></g><g transform="translate(858.2,1098)"><rect x="6.2" y="14" width="9.00" height="24.30" fill="#83beec" stroke="#1062b5" stroke-width="2.5" /><rect x="15.2" y="3.7" width="10.90" height="34.60" fill="#83beec" stroke="#1062b5" stroke-width="2.5" /><rect x="26.1" y="23.8" width="10.00" height="14.50" fill="#83beec" stroke="#1062b5" stroke-width="2.5" /><path d="M1.2 0 V38.3 H39.6" fill="none" stroke="#3b3a39" stroke-width="2.5" /></g><g transform="translate(858.2,1158)"><path d="M12.85 8.8 V31 M9.75 8.8 H15.9 M9.75 31 H15.9 M26.7 6.8 V28.7 M23.75 6.8 H29.8 M23.75 28.7 H29.8" fill="none" stroke="#3b3a39" stroke-width="2.2" /><rect x="9" y="17.3" width="7.60" height="9.50" fill="#83beec" stroke="#1062b5" stroke-width="2.5" /><rect x="23" y="11.2" width="7.50" height="9.60" fill="#83beec" stroke="#1062b5" stroke-width="2.5" /><rect x="11.7" y="4.050000000000001" width="2.3" height="2.3" fill="#3b3a39"/><rect x="11.7" y="33.75" width="2.3" height="2.3" fill="#3b3a39"/><rect x="25.55" y="31.75" width="2.3" height="2.3" fill="#3b3a39"/></g><g transform="translate(858.2,1218)"><rect x="14.9" y="10.2" width="7.4" height="14.4" fill="#797775"/><rect x="22.1" y="2.4" width="5.4" height="22.2" fill="#1062b5"/><rect x="5" y="11.2" width="6.00" height="27.10" fill="#fff" stroke="#3b3a39" stroke-width="2.5" /><rect x="31.4" y="3.65" width="4.70" height="34.65" fill="#fff" stroke="#3b3a39" stroke-width="2.5" /><path d="M3.8 11.2 H15 M27.4 3.65 H37.3" fill="none" stroke="#3b3a39" stroke-width="2.5" /><path d="M1.2 0 V38.3 H39.6" fill="none" stroke="#3b3a39" stroke-width="2.5" /></g><g transform="translate(858.2,1278)"><rect x="1.25" y="3.65" width="37.10" height="9.90" fill="#83beec" stroke="#1062b5" stroke-width="2.5" /><rect x="6.2" y="13.55" width="27.30" height="10.00" fill="#83beec" stroke="#1062b5" stroke-width="2.5" /><rect x="13.5" y="23.55" width="12.80" height="9.75" fill="#83beec" stroke="#1062b5" stroke-width="2.5" /></g><g transform="translate(858.2,1338)"><rect x="26.5" y="11.5" width="10.00" height="27.20" fill="#c8c6c4" stroke="#8a8886" stroke-width="2.5" /><rect x="6.2" y="16.3" width="10.30" height="22.40" fill="#83beec" stroke="#1062b5" stroke-width="2.5" /><rect x="16.5" y="3.85" width="10.00" height="34.85" fill="#fafafa" stroke="#3b3a39" stroke-width="2.5" /><path d="M1.3 36.5 L13.5 20.1 L26 31.4 L38.8 18.6" fill="none" stroke="#3b3a39" stroke-width="2.5" /><path d="M1.3 0 V38.7 H39.7" fill="none" stroke="#3b3a39" stroke-width="2.5" /></g><path d="M1241 301.5 H1248 M1248.5 300 V327 M1257.5 300 V325.5 M1247 301.5 H1259 M1247 325.5 H1266" fill="none" stroke="#7a7875" stroke-width="3" /><path d="M1240 301.5 H1247.5" fill="none" stroke="#3b3a39" stroke-width="3" /><rect x="1227.5" y="301.5" width="12.00" height="57.00" fill="#fafafa" stroke="#3b3a39" stroke-width="3" /><rect x="1266.5" y="280.5" width="9.00" height="45.00" fill="#83beec" stroke="#1062b5" stroke-width="3" /><rect x="1284.5" y="280.5" width="12.00" height="78.00" fill="#fafafa" stroke="#3b3a39" stroke-width="3" /><path d="M1277 280.5 H1284" fill="none" stroke="#3b3a39" stroke-width="3" /><path d="M1221.5 276 V358.5 H1304" fill="none" stroke="#3b3a39" stroke-width="3" /><path d="M2326 118 L2344.5 136.5 M2344.5 118 L2326 136.5" fill="none" stroke="#000" stroke-width="2" /></svg>
<svg style="left:457px;top:404px;" width="41" height="40" viewBox="0 0 41 40"><path d="M9.3 25.2 L19.8 14 L30.3 25.2 Z" fill="#777"/></svg>
<svg style="left:0px;top:0px;" width="2402" height="1607" viewBox="0 0 2402 1607"><rect x="1260.5" y="777.75" width="450.0" height="1" fill="#dcdcdc"/><rect x="1260.5" y="754.20" width="450.0" height="1" fill="#dcdcdc"/><rect x="1260.5" y="730.65" width="450.0" height="1" fill="#dcdcdc"/><rect x="1260.5" y="707.10" width="450.0" height="1" fill="#dcdcdc"/><rect x="1260.5" y="683.55" width="450.0" height="1" fill="#dcdcdc"/><rect x="1260.5" y="660.00" width="450.0" height="1" fill="#dcdcdc"/><rect x="1260.5" y="636.45" width="450.0" height="1" fill="#dcdcdc"/><rect x="1260.5" y="612.90" width="450.0" height="1" fill="#dcdcdc"/><rect x="1260.5" y="589.35" width="450.0" height="1" fill="#dcdcdc"/><rect x="1260.5" y="565.80" width="450.0" height="1" fill="#dcdcdc"/><rect x="1260.0" y="566.30" width="1" height="211.95" fill="#d9d9d9"/><rect x="1270.42" y="661.50" width="36.4" height="116.75" fill="#a5a5a5"/><rect x="1326.67" y="637.95" width="36.4" height="21.75" fill="#4472c4"/><rect x="1382.92" y="579.08" width="36.4" height="57.08" fill="#4472c4"/><rect x="1439.17" y="579.08" width="36.4" height="45.30" fill="#ed7d31"/><rect x="1495.42" y="626.17" width="36.4" height="152.08" fill="#a5a5a5"/><rect x="1551.67" y="626.17" width="36.4" height="68.85" fill="#ed7d31"/><rect x="1607.92" y="614.40" width="36.4" height="80.63" fill="#4472c4"/><rect x="1664.17" y="614.40" width="36.4" height="163.85" fill="#a5a5a5"/><rect x="1306.83" y="660.00" width="19.85" height="1" fill="#d9d9d9"/><rect x="1363.08" y="636.45" width="19.85" height="1" fill="#d9d9d9"/><rect x="1419.33" y="577.58" width="19.85" height="1" fill="#d9d9d9"/><rect x="1475.58" y="624.67" width="19.85" height="1" fill="#d9d9d9"/><rect x="1531.83" y="624.67" width="19.85" height="1" fill="#d9d9d9"/><rect x="1588.08" y="695.33" width="19.85" height="1" fill="#d9d9d9"/><rect x="1644.33" y="612.90" width="19.85" height="1" fill="#d9d9d9"/><rect x="1394" y="539" width="6.5" height="6.5" fill="#4472c4"/><rect x="1455.75" y="539" width="6.5" height="6.5" fill="#ed7d31"/><rect x="1521" y="539" width="6.5" height="6.5" fill="#a5a5a5"/></svg>
<span class="t" style="left:1431.66px;top:505.00px;font-size:18.12px;color:#595959;transform:scaleX(0.9899);">Chart Title</span>
<span class="t" style="left:1404.50px;top:536.00px;font-size:12.32px;color:#595959;transform:scaleX(0.9091);">Increase</span>
<span class="t" style="left:1466.11px;top:536.00px;font-size:12.32px;color:#595959;transform:scaleX(0.8883);">Decrease</span>
<span class="t" style="left:1531.76px;top:536.00px;font-size:12.32px;color:#595959;transform:scaleX(0.9505);">Total</span>
<span class="t" style="left:1248.12px;top:773.00px;font-size:12.0px;color:#595959;transform:scaleX(0.9000);">0</span>
<span class="t" style="left:1242.12px;top:749.00px;font-size:12.0px;color:#595959;transform:scaleX(0.9000);">20</span>
<span class="t" style="left:1242.12px;top:726.00px;font-size:12.0px;color:#595959;transform:scaleX(0.9000);">40</span>
<span class="t" style="left:1242.12px;top:702.00px;font-size:12.0px;color:#595959;transform:scaleX(0.9000);">60</span>
<span class="t" style="left:1242.12px;top:679.00px;font-size:12.0px;color:#595959;transform:scaleX(0.9000);">80</span>
<span class="t" style="left:1236.11px;top:655.00px;font-size:12.0px;color:#595959;transform:scaleX(0.9000);">100</span>
<span class="t" style="left:1236.11px;top:632.00px;font-size:12.0px;color:#595959;transform:scaleX(0.9000);">120</span>
<span class="t" style="left:1236.11px;top:608.00px;font-size:12.0px;color:#595959;transform:scaleX(0.9000);">140</span>
<span class="t" style="left:1236.11px;top:585.00px;font-size:12.0px;color:#595959;transform:scaleX(0.9000);">160</span>
<span class="t" style="left:1236.11px;top:561.00px;font-size:12.0px;color:#595959;transform:scaleX(0.9000);">180</span>
<span class="t" style="left:1279.40px;top:648.00px;font-size:12.0px;color:#595959;transform:scaleX(0.9000);">100</span>
<span class="t" style="left:1338.79px;top:624.00px;font-size:12.0px;color:#595959;transform:scaleX(0.9000);">20</span>
<span class="t" style="left:1395.11px;top:568.00px;font-size:12.0px;color:#595959;transform:scaleX(0.9000);">50</span>
<span class="t" style="left:1449.54px;top:628.00px;font-size:12.0px;color:#595959;transform:scaleX(0.9000);">-40</span>
<span class="t" style="left:1504.40px;top:613.00px;font-size:12.0px;color:#595959;transform:scaleX(0.9000);">130</span>
<span class="t" style="left:1562.04px;top:698.00px;font-size:12.0px;color:#595959;transform:scaleX(0.9000);">-60</span>
<span class="t" style="left:1620.04px;top:601.00px;font-size:12.0px;color:#595959;transform:scaleX(0.9000);">70</span>
<span class="t" style="left:1673.15px;top:601.00px;font-size:12.0px;color:#595959;transform:scaleX(0.9000);">140</span>
<span class="t" style="left:1261.50px;top:802.00px;font-size:12.68px;color:#595959;transform:scaleX(0.8747);">Category 1</span>
<span class="t" style="left:1317.75px;top:788.00px;font-size:12.68px;color:#595959;transform:scaleX(0.8747);">Category 2</span>
<span class="t" style="left:1374.00px;top:802.00px;font-size:12.68px;color:#595959;transform:scaleX(0.8740);">Category 3</span>
<span class="t" style="left:1430.25px;top:788.00px;font-size:12.68px;color:#595959;transform:scaleX(0.8711);">Category 4</span>
<span class="t" style="left:1486.50px;top:802.00px;font-size:12.68px;color:#595959;transform:scaleX(0.8732);">Category 5</span>
<span class="t" style="left:1542.75px;top:788.00px;font-size:12.68px;color:#595959;transform:scaleX(0.8740);">Category 6</span>
<span class="t" style="left:1599.00px;top:802.00px;font-size:12.68px;color:#595959;transform:scaleX(0.8747);">Category 7</span>
<span class="t" style="left:1655.25px;top:788.00px;font-size:12.68px;color:#595959;transform:scaleX(0.8732);">Category 8</span>
</body></html>
